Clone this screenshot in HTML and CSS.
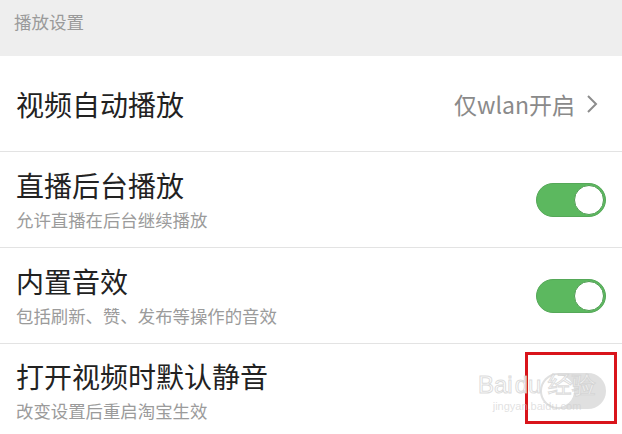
FILE: index.html
```html
<!DOCTYPE html>
<html>
<head>
  <meta charset="utf-8">
  <title>播放设置</title>
  <link rel="stylesheet" href="styles.css">
</head>
<body>
  <div class="section-title">播放设置</div>
  <div class="list">
    <div class="row">
      <div class="label">
        <div class="name">视频自动播放</div>
      </div>
      <div class="value">仅wlan开启
        <svg class="arrow" width="12" height="20" viewBox="0 0 12 20"><path d="M2 2 L10 10 L2 18" fill="none" stroke="#8c8c8c" stroke-width="2"/></svg>
      </div>
    </div>
    <div class="row">
      <div class="label">
        <div class="name">直播后台播放</div>
        <div class="desc">允许直播在后台继续播放</div>
      </div>
      <div class="switch on"><span class="knob"></span></div>
    </div>
    <div class="row">
      <div class="label">
        <div class="name">内置音效</div>
        <div class="desc">包括刷新、赞、发布等操作的音效</div>
      </div>
      <div class="switch on"><span class="knob"></span></div>
    </div>
    <div class="row last">
      <div class="label">
        <div class="name">打开视频时默认静音</div>
        <div class="desc">改变设置后重启淘宝生效</div>
      </div>
      <div class="switch off"><span class="knob"></span></div>
      <div class="mark-box"></div>
      <div class="watermark">
        <div class="wm-logo">Bai<span class="wm-du">du</span> 经验</div>
        <div class="wm-url">jingyan.baidu.com</div>
      </div>
    </div>
  </div>
</body>
</html>
```

FILE: styles.css
```css
/* 播放设置页面 */
body {
  margin: 0;
  padding: 0;
  width: 622px;
  height: 434px;
  overflow: hidden;
  background: #fff;
  font-family: "Noto Sans CJK SC", "Noto Sans", sans-serif;
}

.section-title {
  height: 56px;
  box-sizing: border-box;
  padding: 9px 14px 0;
  background-color: #eeeeee;
  color: #9a9a9a;
  font-size: 17.5px;
  line-height: 26px;
}

.row {
  position: relative;
  height: 96px;
  box-sizing: border-box;
  padding: 0 16px;
  display: flex;
  align-items: center;
  border-bottom: 1px solid #e3e3e3;
}

.row.last {
  border-bottom: none;
  padding-bottom: 2px;
}

.label {
  flex: 1;
}

.name {
  color: #222;
  font-size: 28px;
  line-height: 36px;
}

.desc {
  margin-top: 4px;
  color: #9b9b9b;
  font-size: 17.4px;
  line-height: 26px;
}

.value {
  display: flex;
  align-items: center;
  gap: 11px;
  color: #8a8a8a;
  font-size: 23px;
  padding-right: 8px;
}

.switch {
  position: relative;
  width: 70px;
  height: 34px;
  border-radius: 17px;
  box-sizing: border-box;
}

.switch.on {
  background-color: #5cb85f;
  border: 1px solid #55a858;
}

.switch.off {
  width: 66px;
  height: 36px;
  border-radius: 18px;
  background-color: #e0e0e0;
}

.knob {
  position: absolute;
  top: 1px;
  width: 30px;
  height: 30px;
  border-radius: 50%;
  background: #fff;
}

.switch.on .knob {
  right: 1px;
  border: 1px solid #4f9c52;
  box-sizing: border-box;
}

.switch.off .knob {
  top: 2px;
  left: 2px;
  width: 32px;
  height: 32px;
}

.mark-box {
  position: absolute;
  left: 525px;
  top: 8px;
  width: 92px;
  height: 72px;
  box-sizing: border-box;
  border: 3px solid #d9141b;
}

.watermark {
  position: absolute;
  left: 478px;
  top: 26px;
  text-align: center;
}

.wm-logo {
  font-family: "Liberation Sans", sans-serif;
  font-size: 24px;
  line-height: 30px;
  color: rgba(255, 255, 255, 0.75);
  -webkit-text-stroke: 1px rgba(205, 205, 205, 0.7);
}

.wm-du {
  margin-left: 2px;
}

.wm-url {
  font-family: "Liberation Sans", sans-serif;
  font-size: 11px;
  color: rgba(205, 205, 205, 0.6);
  line-height: 12px;
}
```
